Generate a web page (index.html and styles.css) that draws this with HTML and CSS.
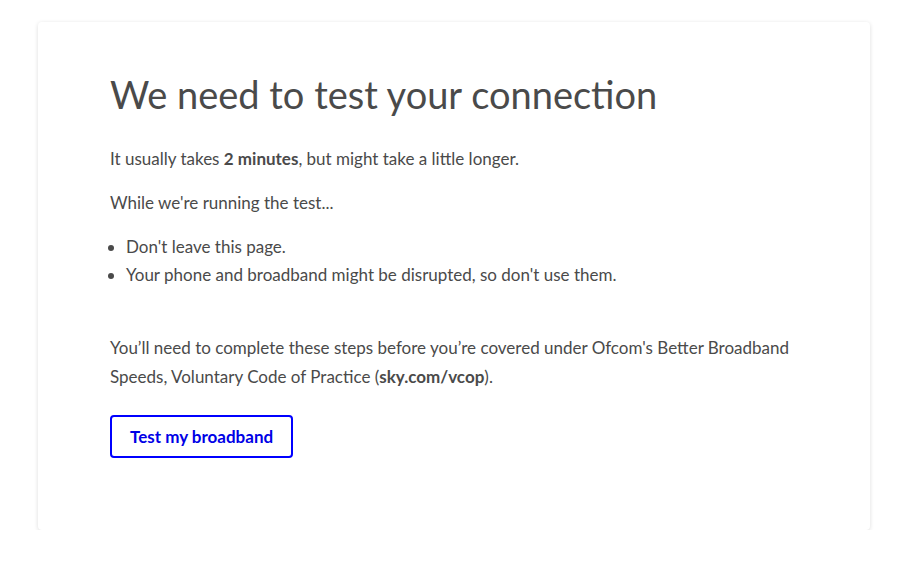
FILE: index.html
```html
<!DOCTYPE html>
<html lang="en">
<head>
    <meta charset="UTF-8">
    <title>Test your connection</title>
    <link rel="stylesheet" href="styles.css">
</head>
<body>
    <div class="card">
        <h1>We need to test your connection</h1>
        <p>It usually takes <strong>2 minutes</strong>, but might take a little longer.</p>
        <p>While we're running the test...</p>
        <ul class="rules">
            <li>Don't leave this page.</li>
            <li>Your phone and broadband might be disrupted, so don't use them.</li>
        </ul>
        <p class="code">You’ll need to complete these steps before you’re covered under Ofcom's Better Broadband Speeds, Voluntary Code of Practice (<strong>sky.com/vcop</strong>).</p>
        <button class="btn">Test my broadband</button>
    </div>
</body>
</html>
```

FILE: styles.css
```css
body {
    margin: 0;
    padding: 22px 27px 0 38px;
    background-color: #fff;
    font-family: Lato, "Open Sans", sans-serif;
    color: #4a4a4a;
}
.card {
    background-color: #fff;
    border-radius: 4px;
    box-shadow: 0 1px 4px rgba(0, 0, 0, 0.14);
    padding: 48px 72px 72px;
    height: 508px;
    box-sizing: border-box;
}
h1 {
    font-weight: 400;
    font-size: 38px;
    line-height: 48px;
    margin: 0 0 27px;
}
p {
    font-size: 17px;
    line-height: 28px;
    margin: 0 0 16px;
}
.rules {
    margin: 0 0 44px;
    padding-left: 16px;
    font-size: 17px;
    line-height: 28px;
}
.code {
    line-height: 29px;
    margin-bottom: 24px;
}
.btn {
    font-family: inherit;
    font-size: 17px;
    font-weight: 700;
    color: #0000e6;
    background: #fff;
    border: 2px solid #0000ff;
    border-radius: 4px;
    height: 43px;
    padding: 0 18px;
    cursor: pointer;
}
```
